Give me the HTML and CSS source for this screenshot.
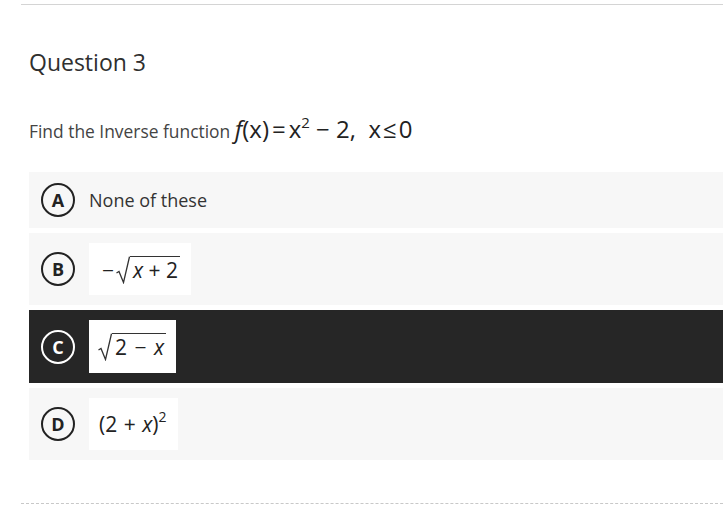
FILE: index.html
```html
<!DOCTYPE html>
<html>
<head>
<meta charset="utf-8">
<link rel="stylesheet" href="styles.css">
</head>
<body>
<div class="page">
  <div class="rule"></div>
  <h2 class="qtitle">Question 3</h2>
  <p class="prompt">Find the Inverse function <span class="qmath"><i>f</i>(x)<span class="eq">=</span>x<sup>2</sup> − 2,&nbsp; x<span class="le">≤</span>0</span></p>
  <div class="options">
    <div class="option first">
      <span class="badge">A</span>
      <span class="label">None of these</span>
    </div>
    <div class="option">
      <span class="badge">B</span>
      <span class="mathbox">
        <span class="math"><span class="neg">−</span><span class="sqrt"><svg class="rad" width="14" height="28" viewBox="0 0 14 28"><path d="M0.5 17 L3 15.5 L7.5 26.5 L13.5 0.75" fill="none" stroke="#333" stroke-width="1.3"/></svg><span class="radicand"><i>x</i> + 2</span></span></span>
      </span>
    </div>
    <div class="option selected">
      <span class="badge">C</span>
      <span class="mathbox tall">
        <span class="math"><span class="sqrt"><svg class="rad" width="14" height="28" viewBox="0 0 14 28"><path d="M0.5 17 L3 15.5 L7.5 26.5 L13.5 0.75" fill="none" stroke="#333" stroke-width="1.3"/></svg><span class="radicand spaced">2 − <i>x</i></span></span></span>
      </span>
    </div>
    <div class="option">
      <span class="badge">D</span>
      <span class="mathbox wide">
        <span class="math"><span class="plain">(2 + <i>x</i>)<sup>2</sup></span></span>
      </span>
    </div>
  </div>
  <div class="dashed"></div>
</div>
</body>
</html>
```
FILE: styles.css
```css
html, body {
  margin: 0;
  padding: 0;
  background: #ffffff;
}
body {
  font-family: "Open Sans", "Liberation Sans", sans-serif;
  color: #333333;
  width: 723px;
  overflow: hidden;
}
.page {
  padding-top: 4px;
}
.rule {
  margin-left: 21px;
  border-top: 1px solid #d4d4d4;
}
.qtitle {
  margin: 41px 0 0 29px;
  font-size: 23px;
  line-height: 32px;
  font-weight: 400;
  color: #2f2f2f;
}
.prompt {
  margin: 39px 0 0 29px;
  font-size: 17.4px;
  line-height: 24px;
  color: #444444;
}
.qmath {
  font-size: 24px;
  color: #222222;
}
.qmath i {
  font-style: italic;
}
.qmath .eq {
  margin: 0 3px;
}
.qmath .le {
  margin: 0 2px;
}
.qmath sup {
  font-size: 15px;
  vertical-align: 10px;
  line-height: 0;
}
.options {
  margin: 29px 0 0 29px;
  display: flex;
  flex-direction: column;
  gap: 5px;
}
.option {
  display: flex;
  align-items: center;
  gap: 14px;
  padding: 10px 12px;
  background: #f7f7f7;
  min-height: 35px;
}
.option.first {
  padding: 11px 12px;
  min-height: 33px;
}
.option.selected {
  background: #262626;
  padding: 10px 12px;
}
.badge {
  box-sizing: border-box;
  width: 34px;
  height: 34px;
  min-width: 34px;
  border: 2px solid #222222;
  border-radius: 50%;
  display: flex;
  align-items: center;
  justify-content: center;
  font-size: 18px;
  line-height: 1;
  font-weight: 700;
  color: #222222;
  flex: none;
}
.selected .badge {
  border-color: #ffffff;
  color: #ffffff;
}
.label {
  font-size: 18px;
  color: #333333;
}
.mathbox {
  background: #ffffff;
  height: 52px;
  display: flex;
  align-items: center;
  padding: 0 11px 0 13px;
}
.mathbox.tall {
  height: 53px;
  padding: 0 10px 0 9px;
}
.mathbox.wide {
  padding: 0 12px 0 10px;
}
.math {
  font-size: 21px;
  color: #222222;
  display: inline-flex;
  align-items: flex-end;
  line-height: 25px;
}
.math i {
  font-style: italic;
}
.plain {
  display: inline-block;
  line-height: 25px;
  word-spacing: 1px;
}
.plain sup {
  font-size: 14px;
  line-height: 0;
  vertical-align: 10px;
}
.neg {
  margin-right: 2px;
  padding-bottom: 1px;
}
.sqrt {
  display: inline-flex;
  align-items: flex-start;
}
.rad {
  display: block;
  margin-top: 1px;
}
.radicand {
  border-top: 1.5px solid #333333;
  padding: 1px 2px 0 3px;
  line-height: 25px;
  margin-top: 1px;
}
.radicand.spaced {
  word-spacing: 2px;
}
.dashed {
  margin: 43px 0 0 21px;
  border-top: 1px dashed #c8c8c8;
}
```
